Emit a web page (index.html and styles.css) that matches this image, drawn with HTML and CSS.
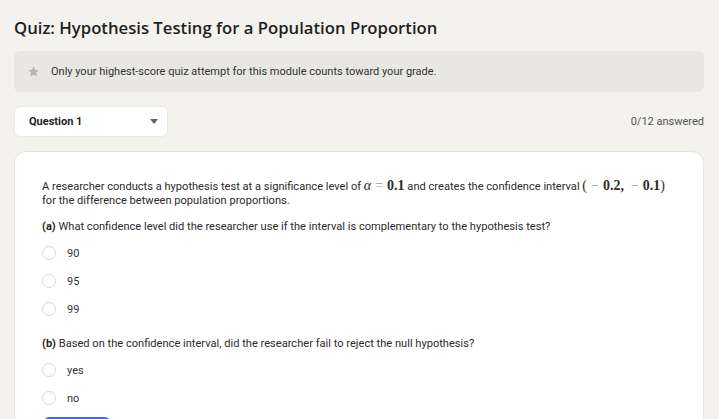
FILE: index.html
```html
<!DOCTYPE html>
<html lang="en">
<head>
    <meta charset="UTF-8">
    <title>Quiz: Hypothesis Testing for a Population Proportion</title>
    <link rel="stylesheet" href="styles.css">
</head>
<body>

<h1 class="quizTitle">Quiz: Hypothesis Testing for a Population Proportion</h1>

<div class="notice">
    <svg class="noticeStar" width="13" height="13" viewBox="0 0 24 24">
        <path d="M12 2l2.9 6.9 7.1.6-5.4 4.7 1.7 7.3L12 17.6 5.7 21.5l1.7-7.3L2 9.5l7.1-.6z" fill="#b9b5b2"/>
    </svg>
    <span>Only your highest-score quiz attempt for this module counts toward your grade.</span>
</div>

<div class="toolbar">
    <div class="questionSelect">
        <span>Question 1</span>
        <svg width="8" height="5" viewBox="0 0 8 5"><path d="M0 0h8L4 5z" fill="#666"/></svg>
    </div>
    <div class="progress">0/12 answered</div>
</div>

<div class="card">
    <p class="prompt">
        A researcher conducts a hypothesis test at a significance level of
        <span class="math"><i>α</i><span class="op">=</span><b>0.1</b></span>
        and creates the confidence interval
        <span class="math">(<span class="op">−</span><b>0.2,</b><span class="op">−</span><b>0.1</b>)</span>
        for the difference between population proportions.
    </p>

    <p class="part"><b>(a)</b> What confidence level did the researcher use if the interval is complementary to the hypothesis test?</p>
    <div class="options">
        <label class="option"><span class="radio"></span>90</label>
        <label class="option"><span class="radio"></span>95</label>
        <label class="option"><span class="radio"></span>99</label>
    </div>

    <p class="part partB"><b>(b)</b> Based on the confidence interval, did the researcher fail to reject the null hypothesis?</p>
    <div class="options">
        <label class="option"><span class="radio"></span>yes</label>
        <label class="option"><span class="radio"></span>no</label>
    </div>

    <button class="submitButton"></button>
</div>

</body>
</html>
```

FILE: styles.css
```css
body {
    background-color: #f3f2ef;
    font-family: 'Roboto', 'Liberation Sans', sans-serif;
    color: #2b2b2b;
    margin: 0;
    padding: 0 15px 0 14px;
    overflow: hidden;
}

.quizTitle {
    font-family: 'Open Sans', sans-serif;
    font-size: 16.7px;
    font-weight: 600;
    color: #1f1f1f;
    margin: 0;
    padding-top: 16px;
    height: 35px;
}

.notice {
    display: flex;
    align-items: center;
    gap: 11px;
    background-color: #e8e7e3;
    border-radius: 6px;
    height: 41px;
    padding-left: 13px;
    font-size: 11px;
    color: #333;
}

.toolbar {
    display: flex;
    align-items: center;
    justify-content: space-between;
    margin-top: 14px;
}

.questionSelect {
    display: flex;
    align-items: center;
    justify-content: space-between;
    box-sizing: border-box;
    width: 154px;
    height: 31px;
    background-color: #fff;
    border: 1px solid #ebe9e5;
    border-radius: 6px;
    padding: 0 9px 0 14px;
    font-size: 11px;
    font-weight: 700;
    color: #1f1f1f;
}

.progress {
    font-size: 11px;
    color: #555;
}

.card {
    background-color: #fff;
    border: 1px solid #e6e4e0;
    border-radius: 12px;
    margin-top: 14px;
    padding: 27px 27px 0 27px;
    height: 300px;
}

.prompt, .part {
    font-size: 11.1px;
    line-height: 14px;
    margin: 0;
    color: #2b2b2b;
}

.math {
    font-family: 'Liberation Serif', serif;
    font-size: 14px;
    white-space: nowrap;
}

.math i {
    font-style: italic;
}

.math .op {
    color: #9b9b9b;
    margin: 0 4px;
}

.math b + .op {
    margin-left: 7px;
}

.part {
    margin-top: 12px;
}

.part b {
    color: #1f1f1f;
}

.partB {
    margin-top: 21px;
}

.options {
    display: flex;
    flex-direction: column;
    gap: 14px;
    margin-top: 12px;
}

.option {
    display: flex;
    align-items: center;
    gap: 11px;
    font-size: 11px;
    color: #333;
    height: 14px;
}

.radio {
    width: 12px;
    height: 12px;
    border: 1px solid #dcdad6;
    border-radius: 50%;
}

.submitButton {
    margin-top: 12px;
    width: 70px;
    height: 30px;
    background-color: #4a63e7;
    border: none;
    border-radius: 8px;
}
```
